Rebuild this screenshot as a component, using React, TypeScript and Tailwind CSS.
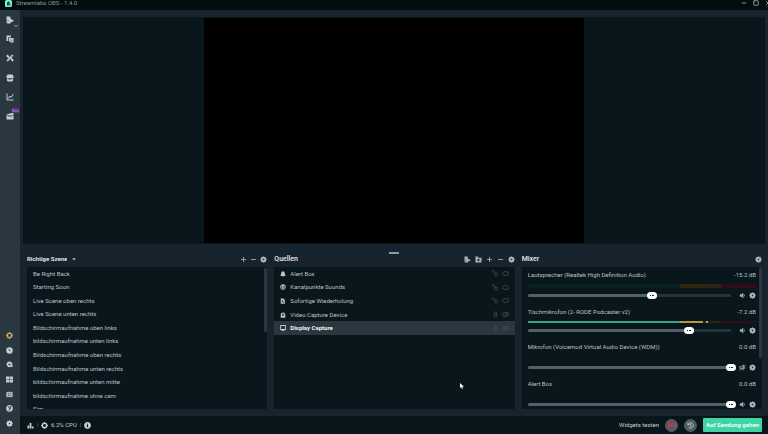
import React, { useState } from 'react';
import type { ReactNode } from 'react';
import {
  FaBell,
  FaCaretDown,
  FaDesktop,
  FaGlobe,
  FaInfoCircle,
  FaQuestionCircle,
  FaThLarge,
  FaVolumeDown,
} from 'react-icons/fa';
import { ChevronDown, Minus, Plus, Square, X } from 'lucide-react';

interface IIcon {
  className?: string;
}

interface ISource {
  name: string;
  icon: ReactNode;
  locked: boolean;
  hidden: boolean;
}

interface IChannel {
  name: string;
  db: string;
  volume: number;
  meters: number;
  live?: boolean;
  peak?: boolean;
  muted?: boolean;
}

const Svg = ({ className = 'size-2', children }: IIcon & { children: ReactNode }) => (
  <svg viewBox="0 0 16 16" fill="currentColor" className={className} aria-hidden="true">
    {children}
  </svg>
);

const Logo = () => (
  <svg viewBox="0 0 14 14" className="size-[7px]" aria-hidden="true">
    <rect width="14" height="14" rx="3" fill="#80f5d2" />
    <path d="M4 11V6.5A3.5 3.5 0 0 1 7.500 3H9v3l2 2v3z" fill="#0b3b35" />
    <path d="M7 7.500h1.200v2H7zM9 7.500h1v2H9z" fill="#80f5d2" />
  </svg>
);

const StudioIcon = ({ className }: IIcon) => (
  <Svg className={className}>
    <path d="M1 1h6a2 2 0 0 1 2 2v3l6 2.500v2L9 13v2H4a3 3 0 0 1-3-3z" />
    <path d="M1 9.500h5" stroke="#2a373f" strokeWidth="1" />
  </Svg>
);

const ThemesIcon = () => (
  <Svg>
    <path d="M1 1h9v3.500H4.500V12H1z" />
    <path d="M6 6h9v9H9.500L6 12z" />
    <path d="M8 10h3v3" fill="none" stroke="#2a373f" strokeWidth="1" />
  </Svg>
);

const ToolsIcon = () => (
  <Svg>
    <path d="M3 1l3 3 1 3-3 1-3-3 0-2zM12 1l3 2-9 10-3 2-2-2zM10 9l2-1 3 4v2l-2 1-4-4z" />
    <path d="M10.500 4.500l2 2M5 9.500l2 2" stroke="#2a373f" strokeWidth="1" />
  </Svg>
);

const StoreIcon = () => (
  <Svg>
    <path d="M3 1h10l2 4v3H1V5z" />
    <path d="M2 9h12v4l-2 2H4l-2-2z" />
    <path d="M5 9h6v2H5z" fill="#2a373f" />
  </Svg>
);

const ChartIcon = () => (
  <Svg>
    <path d="M2 1v13h13M4.500 11l3-5 2.500 3 5-7" fill="none" stroke="currentColor" strokeWidth="2" />
  </Svg>
);

const ClapIcon = () => (
  <Svg>
    <path d="M1 5l10-3 4 0v4H1zM1 7h14v8H1z" />
    <path d="M4 9h8v1H4z" fill="#2a373f" />
  </Svg>
);

const GearIcon = ({ className }: IIcon) => (
  <Svg className={className}>
    <circle cx="8" cy="8" r="4" fill="none" stroke="currentColor" strokeWidth="5" />
    <path d="M8 1v3M8 12v3M1 8h3M12 8h3M3 3l2 2M11 11l2 2M13 3l-2 2M5 11l-2 2" stroke="currentColor" strokeWidth="2.500" />
  </Svg>
);

const RingIcon = ({ className }: IIcon) => (
  <Svg className={className}>
    <circle cx="8" cy="8" r="5" fill="none" stroke="currentColor" strokeWidth="3.500" />
    <path d="M8 0v3M8 13v3M0 8h3M13 8h3" stroke="currentColor" strokeWidth="2" />
  </Svg>
);

const DiscIcon = ({ className }: IIcon) => (
  <Svg className={className}>
    <circle cx="8" cy="8" r="7.500" />
    <path d="M5 6l3-1 3 5-2-1z" fill="#2a373f" />
  </Svg>
);

const ChatIcon = ({ className }: IIcon) => (
  <Svg className={className}>
    <path d="M8 1a6.500 6.500 0 0 1 6.300 8l1 5-4-1A6.500 6.500 0 1 1 8 1z" />
    <path d="M6 6h4l1 2-3 2-2-1z" fill="#2a373f" />
  </Svg>
);

const PanelIcon = ({ className }: IIcon) => (
  <Svg className={className}>
    <path d="M1 2h14v12H1z" />
    <path d="M5 2v12M11 2v12M5 6h6M5 10h6" stroke="#2a373f" strokeWidth="1" />
  </Svg>
);

const BarsIcon = ({ className }: IIcon) => (
  <Svg className={className}>
    <path d="M1 8h4v7H1zM6 2h4v13H6zM11 10h4v5h-4z" />
  </Svg>
);

const FileIcon = ({ className }: IIcon) => (
  <Svg className={className}>
    <path d="M2 1h7l4 4v10H2z" />
    <path d="M5 7h3v1H6v2h3v3" fill="none" stroke="#09161c" strokeWidth="1.500" />
  </Svg>
);

const FolderIcon = ({ className }: IIcon) => (
  <Svg className={className}>
    <path d="M1 1h6l1 3h7v11H1z" />
    <path d="M8 6v6M5 9h6" stroke="#17242d" strokeWidth="2" />
  </Svg>
);

const WebcamIcon = ({ className }: IIcon) => (
  <Svg className={className}>
    <path d="M2 14V6a6 5 0 0 1 12 0v8l1 1H1z" />
    <circle cx="8" cy="7" r="3" fill="#09161c" />
    <circle cx="8" cy="7" r="1.500" />
  </Svg>
);

const MutedIcon = ({ className }: IIcon) => (
  <Svg className={className}>
    <path d="M2 6h4l4-4v11l-4-3H2z" fill="none" stroke="currentColor" strokeWidth="2" />
    <path d="M2 15L15 2M13 6v5" stroke="currentColor" strokeWidth="2" />
  </Svg>
);

const ReplayIcon = ({ className }: IIcon) => (
  <Svg className={className}>
    <path d="M2 2v4h4M2.500 6A6 6 0 1 1 3 11M8 5v4l2.500 1" fill="none" stroke="currentColor" strokeWidth="2" />
  </Svg>
);

const LockIcon = ({ open = false }: { open?: boolean }) => (
  <Svg className="size-[7px]">
    {open ? (
      <g fill="none" stroke="currentColor" strokeWidth="2">
        <path d="M1 6V4a2.500 2.500 0 0 1 5 0v3" />
        <circle cx="9.500" cy="10.500" r="3.500" />
      </g>
    ) : (
      <g fill="none" stroke="currentColor" strokeWidth="2">
        <path d="M6 7V4a2 2 0 0 1 4 0v3" />
        <circle cx="8" cy="10.500" r="3.500" />
      </g>
    )}
  </Svg>
);

const EyeIcon = ({ hidden = false }: { hidden?: boolean }) => (
  <Svg className="size-[7px]">
    <g fill="none" stroke="currentColor" strokeWidth="2">
      <ellipse cx="8" cy="8" rx="7" ry="4.500" />
      {hidden && <path d="M3 14L14 2M8 8h4" />}
    </g>
  </Svg>
);

const IconButton = ({ label, className = '', children }: { label: string; className?: string; children: ReactNode }) => (
  <button type="button" aria-label={label} className={`flex items-center justify-center ${className}`}>
    {children}
  </button>
);

const navItems = [
  { label: 'Editor', icon: <StudioIcon /> },
  { label: 'Themes', icon: <ThemesIcon /> },
  { label: 'Tools', icon: <ToolsIcon /> },
  { label: 'Store', icon: <StoreIcon /> },
  { label: 'Dashboard', icon: <ChartIcon /> },
  { label: 'Highlighter', icon: <ClapIcon /> },
];

const bottomItems = [
  { label: 'Prime', icon: <RingIcon className="size-[7px] text-[#c9a558]" /> },
  { label: 'Cloudbot', icon: <DiscIcon className="size-[7px]" /> },
  { label: 'Chat', icon: <ChatIcon className="size-[7px]" /> },
  { label: 'Layout', icon: <FaThLarge className="size-[7px]" /> },
  { label: 'Panels', icon: <PanelIcon className="size-[7px]" /> },
  { label: 'Hilfe', icon: <FaQuestionCircle className="size-[7px]" /> },
  { label: 'Einstellungen', icon: <GearIcon className="size-[7px]" /> },
];

const scenes = [
  'Be Right Back',
  'Starting Soon',
  'Live Scene oben rechts',
  'Live Scene unten rechts',
  'Bildschirmaufnahme oben links',
  'bildschirmaufnahme unten links',
  'Bildschirmaufnahme oben rechts',
  'Bildschirmaufnahme unten rechts',
  'bildschirmaufnahme unten mitte',
  'bildschirmaufnahme ohne cam',
  'Sim',
];

const sources: ISource[] = [
  { name: 'Alert Box', icon: <FaBell className="size-[6px]" />, locked: false, hidden: false },
  { name: 'Kanalpunkte Sounds', icon: <FaGlobe className="size-[6px]" />, locked: false, hidden: false },
  { name: 'Sofortige Wiederholung', icon: <FileIcon className="size-[6px]" />, locked: false, hidden: false },
  { name: 'Video Capture Device', icon: <WebcamIcon className="size-[6px]" />, locked: true, hidden: true },
  { name: 'Display Capture', icon: <FaDesktop className="size-[6px]" />, locked: true, hidden: true },
];

const channels: IChannel[] = [
  { name: 'Lautsprecher (Realtek High Definition Audio)', db: '-15.2 dB', volume: 60, meters: 2 },
  { name: 'Tischmikrofon (2- RODE Podcaster v2)', db: '-7.2 dB', volume: 79, meters: 1, live: true, peak: true },
  { name: 'Mikrofon (Voicemod Virtual Audio Device (WDM))', db: '0.0 dB', volume: 100, meters: 0, muted: true },
  { name: 'Alert Box', db: '0.0 dB', volume: 100, meters: 0 },
];

function Sidebar() {
  return (
    <nav className="flex w-5 shrink-0 flex-col justify-between bg-[#2a373f] pb-[3px] text-[#c5cdd1]">
      <div className="grid h-[116px] auto-rows-fr">
        {navItems.map((item, i) => (
          <div key={item.label} className="relative flex">
            <IconButton label={item.label} className="w-full pr-px">
              {item.icon}
            </IconButton>
            {i === 0 && (
              <ChevronDown className="absolute right-px bottom-0 size-[6px] text-[#5fc9ab]" strokeWidth={4} />
            )}
            {i === 5 && (
              <span className="absolute top-px right-px bg-[#5b3585] text-[4px] leading-[5px] text-[#b98ae0]">Neu</span>
            )}
          </div>
        ))}
      </div>
      <div className="grid h-[103px] auto-rows-fr">
        {bottomItems.map((item) => (
          <IconButton key={item.label} label={item.label} className="w-full pr-px">
            {item.icon}
          </IconButton>
        ))}
      </div>
    </nav>
  );
}

function Scenes() {
  return (
    <section className="min-w-0">
      <header className="flex h-[13px] items-start justify-between text-[#a5afb4]">
        <div className="relative flex h-[10px] items-center">
          <select
            aria-label="Szenensammlung"
            className="appearance-none bg-transparent pr-[10px] text-[6px] leading-[10px] font-bold text-[#dfe4e6] [field-sizing:content]"
          >
            <option>Richtige Szene</option>
          </select>
          <FaCaretDown className="pointer-events-none absolute right-0 size-[6px]" />
        </div>
        <div className="flex h-[10px] items-center gap-[3px]">
          <IconButton label="Szene hinzufügen">
            <Plus className="size-[7px]" strokeWidth={3} />
          </IconButton>
          <IconButton label="Szene entfernen">
            <Minus className="size-[7px]" strokeWidth={3} />
          </IconButton>
          <IconButton label="Szene bearbeiten">
            <GearIcon className="size-[7px]" />
          </IconButton>
        </div>
      </header>
      <div className="flex h-[142px] justify-between overflow-hidden bg-[#09161c]">
        <ul className="grid h-[149px] flex-1 auto-rows-fr">
          {scenes.map((scene) => (
            <li key={scene} className="flex">
              <button type="button" className="flex-1 pl-[6px] text-left text-[#b9c2c6]">
                {scene}
              </button>
            </li>
          ))}
        </ul>
        <div className="mt-px h-16 w-[3px] rounded-full bg-[#2a373f]" />
      </div>
    </section>
  );
}

function Sources() {
  const [selected, setSelected] = useState('Display Capture');

  return (
    <section className="min-w-0">
      <header className="flex h-[13px] items-start justify-between text-[#a5afb4]">
        <h2 className="text-[7px] leading-[10px] font-medium text-[#e3e8ea]">Quellen</h2>
        <div className="flex h-[10px] items-center gap-1">
          <IconButton label="Quellen im Editor">
            <StudioIcon className="size-[7px]" />
          </IconButton>
          <IconButton label="Ordner hinzufügen">
            <FolderIcon className="size-[7px]" />
          </IconButton>
          <IconButton label="Quelle hinzufügen">
            <Plus className="size-[7px]" strokeWidth={3} />
          </IconButton>
          <IconButton label="Quelle entfernen">
            <Minus className="size-[7px]" strokeWidth={3} />
          </IconButton>
          <IconButton label="Quelle bearbeiten">
            <GearIcon className="size-[7px]" />
          </IconButton>
        </div>
      </header>
      <div className="h-[142px] bg-[#09161c]">
        <ul className="grid h-[68px] auto-rows-fr">
          {sources.map((source) => (
            <li
              key={source.name}
              className={`flex items-center gap-1 px-[6px] ${
                source.name === selected ? 'bg-[#2a373f] font-bold text-[#f1f4f5]' : 'text-[#b9c2c6]'
              }`}
            >
              <button
                type="button"
                className="flex flex-1 items-center gap-1 text-left"
                onClick={() => setSelected(source.name)}
              >
                {source.icon}
                {source.name}
              </button>
              <div className="flex gap-[3px] text-[#3f4e55]">
                <IconButton label={`${source.name} sperren`}>
                  <LockIcon open={!source.locked} />
                </IconButton>
                <IconButton label={`${source.name} anzeigen`}>
                  <EyeIcon hidden={source.hidden} />
                </IconButton>
              </div>
            </li>
          ))}
        </ul>
      </div>
    </section>
  );
}

function Meter({ live, peak }: { live?: boolean; peak?: boolean }) {
  return (
    <div className="relative flex h-[2px]">
      <div className={`w-2/3 ${live ? 'bg-[#35a386]' : 'bg-[#0b221f]'}`} />
      <div className={live ? 'w-[10%] bg-[#bf9440]' : 'w-[10%] bg-[#30260f]'} />
      <div className="w-[8%] bg-[#2b2414]" />
      <div className="flex-1 bg-[#2f0c16]" />
      {peak && <div className="absolute left-[78%] h-full w-[2px] bg-[#c9a04a]" />}
    </div>
  );
}

function Channel({ channel }: { channel: IChannel }) {
  const [volume, setVolume] = useState(channel.volume);
  const level = `calc(5px + (100% - 10px) * ${volume / 100})`;

  return (
    <div>
      <div className="flex h-[14px] justify-between pt-px leading-[10px] text-[#b9c2c6]">
        <span>{channel.name}</span>
        <span>{channel.db}</span>
      </div>
      <div className={channel.meters === 1 ? 'h-[7px] pt-px' : 'h-[9px] pt-px'}>
        {Array.from({ length: channel.meters }).map((_, i) => (
          <Meter key={i} live={channel.live} peak={channel.peak} />
        ))}
      </div>
      <div className="flex h-[14px] items-start gap-[3px] text-[#a5afb4]">
        <input
          type="range"
          aria-label={channel.name}
          value={volume}
          onChange={(e) => setVolume(Number(e.target.value))}
          style={{ '--level': level } as React.CSSProperties}
          className="h-[7px] min-w-0 flex-1 appearance-none bg-transparent [&::-webkit-slider-runnable-track]:h-[3px] [&::-webkit-slider-runnable-track]:rounded-full [&::-webkit-slider-runnable-track]:bg-[linear-gradient(to_right,#526067_var(--level),#25333a_var(--level),#25333a_calc(100%-5px),transparent_calc(100%-5px))] [&::-webkit-slider-thumb]:-mt-[2px] [&::-webkit-slider-thumb]:h-[7px] [&::-webkit-slider-thumb]:w-[10px] [&::-webkit-slider-thumb]:appearance-none [&::-webkit-slider-thumb]:rounded-full [&::-webkit-slider-thumb]:bg-white [&::-webkit-slider-thumb]:bg-[radial-gradient(circle_at_35%_50%,#17242d_1px,transparent_1px),radial-gradient(circle_at_65%_50%,#17242d_1px,transparent_1px)]"
        />
        <IconButton label={`${channel.name} stumm`}>
          {channel.muted ? <MutedIcon className="size-[7px]" /> : <FaVolumeDown className="size-[7px]" />}
        </IconButton>
        <IconButton label={`${channel.name} Einstellungen`}>
          <GearIcon className="size-[7px]" />
        </IconButton>
      </div>
    </div>
  );
}

function Mixer() {
  return (
    <section className="min-w-0">
      <header className="flex h-[13px] items-start justify-between text-[#a5afb4]">
        <h2 className="text-[7px] leading-[10px] font-medium text-[#e3e8ea]">Mixer</h2>
        <IconButton label="Mixer Einstellungen" className="h-[10px]">
          <GearIcon className="size-[7px]" />
        </IconButton>
      </header>
      <div className="flex h-[142px] overflow-hidden bg-[#09161c]">
        <div className="min-w-0 flex-1 pt-[2px] pr-[3px] pl-[6px]">
          {channels.map((channel) => (
            <Channel key={channel.name} channel={channel} />
          ))}
        </div>
        <div className="h-[91px] w-[3px] rounded-full bg-[#2a373f]" />
      </div>
    </section>
  );
}

function Footer() {
  return (
    <footer className="flex h-[18px] shrink-0 items-center justify-between bg-[#08151b] pr-[6px] pl-[7px] text-[#c5cdd1]">
      <div className="flex items-center gap-[3px]">
        <BarsIcon className="size-[7px]" />
        <span className="h-1 w-px bg-[#34434a]" />
        <RingIcon className="size-[7px]" />
        <span>6.2% CPU</span>
        <span className="h-1 w-px bg-[#34434a]" />
        <FaInfoCircle className="size-[7px]" />
      </div>
      <div className="flex items-center gap-[6px]">
        <button type="button">Widgets testen</button>
        <button
          type="button"
          className="flex size-[13px] items-center justify-center rounded-full bg-[#4f5c63] text-[5px] font-bold text-[#f0243a]"
        >
          REC
        </button>
        <IconButton label="Wiederholung" className="size-[13px] rounded-full bg-[#4f5c63]">
          <ReplayIcon className="size-[7px]" />
        </IconButton>
        <button
          type="button"
          className="h-[14px] rounded-[1px] bg-[#3fd3a6] px-[3px] font-bold whitespace-nowrap text-[#eafff8]"
        >
          Auf Sendung gehen
        </button>
      </div>
    </footer>
  );
}

export default function App() {
  return (
    <div className="flex h-screen flex-col overflow-hidden bg-[#17242d] font-[Roboto,sans-serif] text-[6px] leading-[10px]">
      <header className="flex h-[10px] shrink-0 items-start justify-between bg-[#020d10] pl-[5px] text-[#87939a]">
        <div className="flex items-start gap-1">
          <Logo />
          <span className="leading-[6px]">Streamlabs OBS - 1.4.0</span>
        </div>
        <div className="flex gap-[6px]">
          <IconButton label="Minimieren">
            <Minus className="size-[6px]" strokeWidth={4} />
          </IconButton>
          <IconButton label="Maximieren">
            <Square className="size-[6px]" strokeWidth={4} />
          </IconButton>
          <IconButton label="Schließen" className="-mr-[3px]">
            <X className="size-[6px]" strokeWidth={4} />
          </IconButton>
        </div>
      </header>

      <div className="flex min-h-0 flex-1">
        <Sidebar />
        <div className="flex min-w-0 flex-1 flex-col">
          <main className="mx-[3px] mt-[7px] flex min-h-0 flex-1 justify-center bg-[#09161c] py-px">
            <div className="aspect-[380/225] h-full bg-black" />
          </main>

          <div className="mx-auto mt-2 h-[2px] w-[10px] shrink-0 bg-[#8f9a9f]" />
          <div className="grid shrink-0 grid-cols-3 gap-[7px] pr-[6px] pb-[7px] pl-[7px]">
            <Scenes />
            <Sources />
            <Mixer />
          </div>
          <Footer />
        </div>
      </div>

      <svg viewBox="0 0 8 12" className="absolute top-[383px] left-[460px] h-[6px] w-1" aria-hidden="true">
        <path d="M0 0v10l2.500-2 1.500 4 2-1-1.500-3.500H8z" fill="#f4f6f7" />
      </svg>
    </div>
  );
}
